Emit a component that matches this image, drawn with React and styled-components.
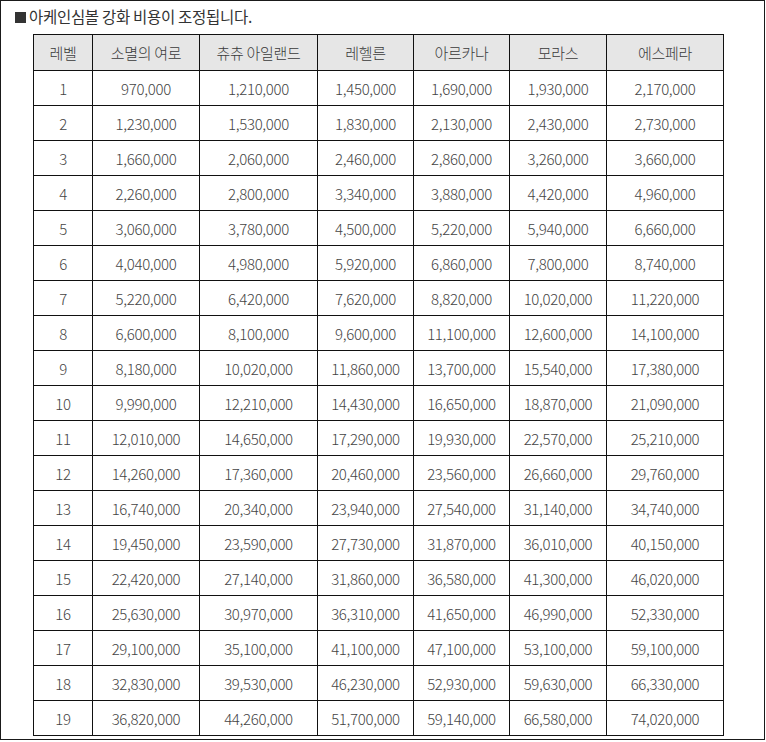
import React from "react";
import styled, { createGlobalStyle } from "styled-components";

const Global = createGlobalStyle`
  html, body { margin: 0; padding: 0; background: #fff; }
  body { font-family: "Noto Sans CJK KR", "Noto Sans", sans-serif; }
`;

const Frame = styled.div`
  box-sizing: border-box;
  width: 765px;
  height: 740px;
  border: 1px solid #1a1a1a;
  background: #fff;
`;

const Title = styled.div`
  height: 33px;
  padding-left: 14px;
  display: flex;
  align-items: center;
  font-size: 15.5px;
  color: #333;
  letter-spacing: -0.3px;
  line-height: 1;
  padding-bottom: 1px;
  box-sizing: border-box;
`;

const Square = styled.span`
  display: inline-block;
  width: 11px;
  height: 11px;
  background: #333;
  margin-right: 3px;
`;

const Table = styled.table`
  margin-left: 32px;
  border-collapse: collapse;
  table-layout: fixed;
  width: 690px;
  font-size: 15px;
  font-weight: 300;
  color: #444;
`;

const Col = styled.col`
  width: ${(p) => p.$w}px;
`;

const Th = styled.th`
  height: 35px;
  padding: 0;
  border: 1px solid #111;
  background: #e6e6e6;
  font-weight: 300;
  text-align: center;
  color: #3a3a3a;
  letter-spacing: -0.3px;
`;

const Td = styled.td`
  height: 34px;
  padding: 0;
  border: 1px solid #111;
  text-align: center;
  letter-spacing: -0.3px;
`;

const headers = [
  ["레벨", 59],
  ["소멸의 여로", 107],
  ["츄츄 아일랜드", 118],
  ["레헬른", 96],
  ["아르카나", 96],
  ["모라스", 97],
  ["에스페라", 117],
];

const rows = [
  [970000, 1210000, 1450000, 1690000, 1930000, 2170000],
  [1230000, 1530000, 1830000, 2130000, 2430000, 2730000],
  [1660000, 2060000, 2460000, 2860000, 3260000, 3660000],
  [2260000, 2800000, 3340000, 3880000, 4420000, 4960000],
  [3060000, 3780000, 4500000, 5220000, 5940000, 6660000],
  [4040000, 4980000, 5920000, 6860000, 7800000, 8740000],
  [5220000, 6420000, 7620000, 8820000, 10020000, 11220000],
  [6600000, 8100000, 9600000, 11100000, 12600000, 14100000],
  [8180000, 10020000, 11860000, 13700000, 15540000, 17380000],
  [9990000, 12210000, 14430000, 16650000, 18870000, 21090000],
  [12010000, 14650000, 17290000, 19930000, 22570000, 25210000],
  [14260000, 17360000, 20460000, 23560000, 26660000, 29760000],
  [16740000, 20340000, 23940000, 27540000, 31140000, 34740000],
  [19450000, 23590000, 27730000, 31870000, 36010000, 40150000],
  [22420000, 27140000, 31860000, 36580000, 41300000, 46020000],
  [25630000, 30970000, 36310000, 41650000, 46990000, 52330000],
  [29100000, 35100000, 41100000, 47100000, 53100000, 59100000],
  [32830000, 39530000, 46230000, 52930000, 59630000, 66330000],
  [36820000, 44260000, 51700000, 59140000, 66580000, 74020000],
];

const fmt = (n) => n.toString().replace(/\B(?=(\d{3})+(?!\d))/g, ",");

export default function App() {
  return (
    <>
      <Global />
      <Frame>
        <Title>
          <Square />
          아케인심볼 강화 비용이 조정됩니다.
        </Title>
        <Table>
          <colgroup>
            {headers.map(([h, w]) => (
              <Col key={h} $w={w} />
            ))}
          </colgroup>
          <thead>
            <tr>
              {headers.map(([h]) => (
                <Th key={h}>{h}</Th>
              ))}
            </tr>
          </thead>
          <tbody>
            {rows.map((r, i) => (
              <tr key={i}>
                <Td>{i + 1}</Td>
                {r.map((v, j) => (
                  <Td key={j}>{fmt(v)}</Td>
                ))}
              </tr>
            ))}
          </tbody>
        </Table>
      </Frame>
    </>
  );
}
